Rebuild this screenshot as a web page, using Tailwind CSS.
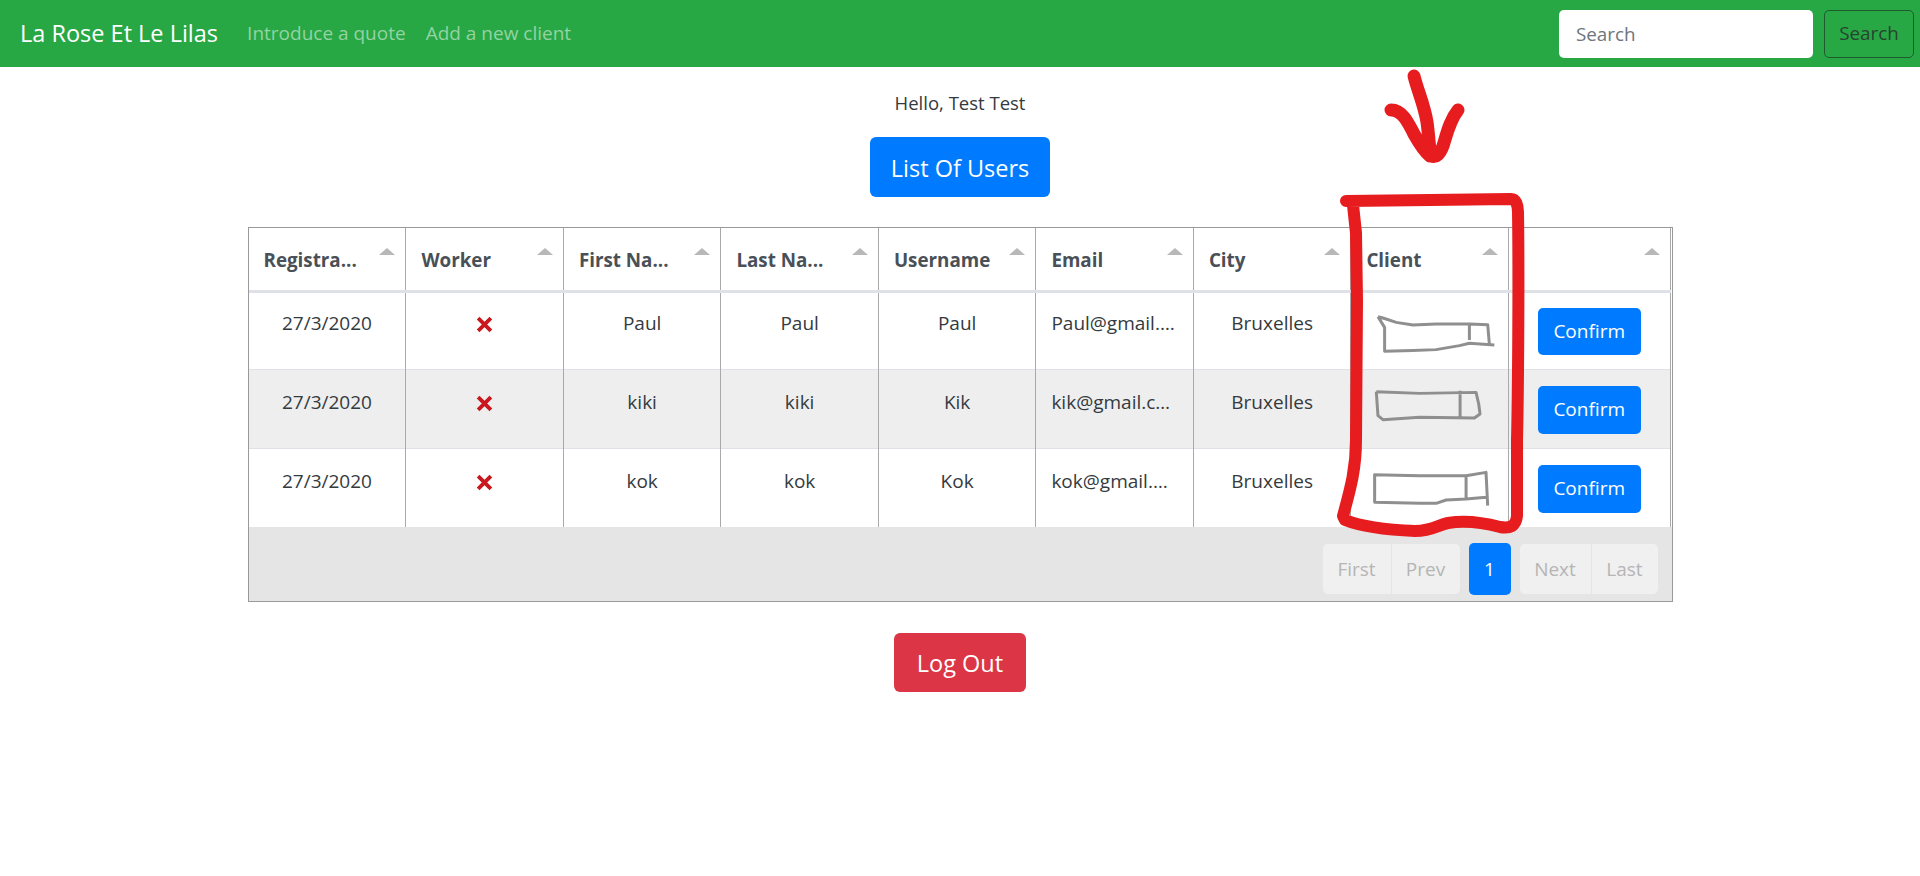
<!DOCTYPE html>
<html lang="en">
<head>
  <meta charset="UTF-8">
  <title>La Rose Et Le Lilas</title>
  <script src="https://cdn.jsdelivr.net/npm/@tailwindcss/browser@4"></script>
</head>
<body class="relative bg-white text-[#343a40] font-['Open_Sans',sans-serif] text-[19px] min-h-screen overflow-hidden">

  <!-- Navbar -->
  <nav class="h-[67px] bg-[#28a745] flex items-center pl-[20px] pr-[6px]">
    <a class="text-white text-[23.5px] mr-[29px]">La Rose Et Le Lilas</a>
    <a class="text-[#94d3a2] text-[19px] mr-[20px]">Introduce a quote</a>
    <a class="text-[#94d3a2] text-[19px]">Add a new client</a>
    <input placeholder="Search" class="ml-auto w-[254px] h-[48px] bg-white rounded-[5px] px-[17px] text-[18.8px] placeholder:text-[#6c757d] mr-[11px]">
    <button class="w-[90px] h-[48px] rounded-[5px] border border-[#1e5c30] text-[#27442f] text-[18.8px]">Search</button>
  </nav>

  <main class="flex flex-col items-center">
    <p class="mt-[21px] h-[29px] leading-[29px] text-[18.5px]">Hello, Test Test</p>
    <button class="mt-[20px] w-[180px] h-[60px] pt-[3px] bg-[#007bff] text-white text-[23.5px] rounded-[6px]">List Of Users</button>

    <div class="mt-[30px] w-[1425px] border border-[#999]">
      <table class="table-fixed w-[1422px] border-collapse">
        <colgroup>
          <col class="w-[157.4px]"><col class="w-[157.5px]"><col class="w-[157.5px]"><col class="w-[157.5px]">
          <col class="w-[157.5px]"><col class="w-[157.5px]"><col class="w-[157.5px]"><col class="w-[157.5px]"><col>
        </colgroup>
        <thead>
          <tr class="h-[63px] border-b-[3px] border-[#dee2e6] text-[#495057] text-left font-bold text-[18.8px]">
            <th class="relative pl-[15px] pt-[2px] border-r border-[#aaa] whitespace-nowrap">Registra...<span class="absolute top-[20px] right-[10px] border-x-[8px] border-x-transparent border-b-[7px] border-b-[#b8b8b8]"></span></th>
            <th class="relative pl-[15px] pt-[2px] border-r border-[#aaa] whitespace-nowrap">Worker<span class="absolute top-[20px] right-[10px] border-x-[8px] border-x-transparent border-b-[7px] border-b-[#b8b8b8]"></span></th>
            <th class="relative pl-[15px] pt-[2px] border-r border-[#aaa] whitespace-nowrap">First Na...<span class="absolute top-[20px] right-[10px] border-x-[8px] border-x-transparent border-b-[7px] border-b-[#b8b8b8]"></span></th>
            <th class="relative pl-[15px] pt-[2px] border-r border-[#aaa] whitespace-nowrap">Last Na...<span class="absolute top-[20px] right-[10px] border-x-[8px] border-x-transparent border-b-[7px] border-b-[#b8b8b8]"></span></th>
            <th class="relative pl-[15px] pt-[2px] border-r border-[#aaa] whitespace-nowrap">Username<span class="absolute top-[20px] right-[10px] border-x-[8px] border-x-transparent border-b-[7px] border-b-[#b8b8b8]"></span></th>
            <th class="relative pl-[15px] pt-[2px] border-r border-[#aaa] whitespace-nowrap">Email<span class="absolute top-[20px] right-[10px] border-x-[8px] border-x-transparent border-b-[7px] border-b-[#b8b8b8]"></span></th>
            <th class="relative pl-[15px] pt-[2px] border-r border-[#aaa] whitespace-nowrap">City<span class="absolute top-[20px] right-[10px] border-x-[8px] border-x-transparent border-b-[7px] border-b-[#b8b8b8]"></span></th>
            <th class="relative pl-[15px] pt-[2px] border-r border-[#aaa] whitespace-nowrap">Client<span class="absolute top-[20px] right-[10px] border-x-[8px] border-x-transparent border-b-[7px] border-b-[#b8b8b8]"></span></th>
            <th class="relative border-r border-[#aaa]"><span class="absolute top-[20px] right-[10px] border-x-[8px] border-x-transparent border-b-[7px] border-b-[#b8b8b8]"></span></th>
          </tr>
        </thead>
        <tbody class="text-center">
          <!-- row 1 -->
          <tr class="h-[78px] border-b border-[#dee2e6] align-top">
            <td class="pt-[16px] border-r border-[#aaa]">27/3/2020</td>
            <td class="pt-[23px] border-r border-[#aaa]"><svg class="mx-auto w-[17px] h-[17px]" viewBox="0 0 16 16"><path d="M2 2 14 14M14 2 2 14" stroke="#c9181e" stroke-width="3.6"/></svg></td>
            <td class="pt-[16px] border-r border-[#aaa]">Paul</td>
            <td class="pt-[16px] border-r border-[#aaa]">Paul</td>
            <td class="pt-[16px] border-r border-[#aaa]">Paul</td>
            <td class="pt-[16px] px-[15px] border-r border-[#aaa] text-left truncate">Paul@gmail.com</td>
            <td class="pt-[16px] border-r border-[#aaa]">Bruxelles</td>
            <td class="border-r border-[#aaa] align-middle">
              <svg class="block mx-auto w-[133px] h-[50px]" viewBox="130 76 400 150" fill="none" stroke="#8f8f8f" stroke-width="9" stroke-linejoin="round"><path d="M175 108 190 112 230 125 280 133 350 130 450 130 505 132 510 190M525 193 450 188 420 195 350 207 280 210 195 212 195 140 175 108M450 130V178"/></svg>
            </td>
            <td class="pt-[15px] border-r border-[#aaa]"><button class="w-[103px] h-[47px] bg-[#007bff] text-white rounded-[5px]">Confirm</button></td>
          </tr>
          <!-- row 2 -->
          <tr class="h-[79px] border-b border-[#dee2e6] align-top bg-[#eeeeee]">
            <td class="pt-[18px] border-r border-[#aaa]">27/3/2020</td>
            <td class="pt-[25px] border-r border-[#aaa]"><svg class="mx-auto w-[17px] h-[17px]" viewBox="0 0 16 16"><path d="M2 2 14 14M14 2 2 14" stroke="#c9181e" stroke-width="3.6"/></svg></td>
            <td class="pt-[18px] border-r border-[#aaa]">kiki</td>
            <td class="pt-[18px] border-r border-[#aaa]">kiki</td>
            <td class="pt-[18px] border-r border-[#aaa]">Kik</td>
            <td class="pt-[18px] px-[15px] border-r border-[#aaa] text-left truncate">kik@gmail.com</td>
            <td class="pt-[18px] border-r border-[#aaa]">Bruxelles</td>
            <td class="border-r border-[#aaa] align-middle">
              <svg class="block mx-auto w-[133px] h-[50px]" viewBox="130 310 400 150" fill="none" stroke="#8f8f8f" stroke-width="9" stroke-linejoin="round"><path d="M170 333 300 338 470 335 478 370 482 400 465 412 300 410 190 417 175 405 170 333M422 330V412"/></svg>
            </td>
            <td class="pt-[16px] border-r border-[#aaa]"><button class="w-[103px] h-[48px] bg-[#007bff] text-white rounded-[5px]">Confirm</button></td>
          </tr>
          <!-- row 3 -->
          <tr class="h-[79px] align-top">
            <td class="pt-[18px] border-r border-[#aaa]">27/3/2020</td>
            <td class="pt-[25px] border-r border-[#aaa]"><svg class="mx-auto w-[17px] h-[17px]" viewBox="0 0 16 16"><path d="M2 2 14 14M14 2 2 14" stroke="#c9181e" stroke-width="3.6"/></svg></td>
            <td class="pt-[18px] border-r border-[#aaa]">kok</td>
            <td class="pt-[18px] border-r border-[#aaa]">kok</td>
            <td class="pt-[18px] border-r border-[#aaa]">Kok</td>
            <td class="pt-[18px] pl-[15px] pr-[20px] border-r border-[#aaa] text-left truncate">kok@gmail.com</td>
            <td class="pt-[18px] border-r border-[#aaa]">Bruxelles</td>
            <td class="border-r border-[#aaa] align-middle">
              <svg class="block mx-auto w-[133px] h-[50px]" viewBox="130 547 400 150" fill="none" stroke="#8f8f8f" stroke-width="9" stroke-linejoin="round"><path d="M162 582 300 585 440 585 500 575 505 675M165 580V665L300 668 350 668 380 658 440 655 500 650M440 585V658"/></svg>
            </td>
            <td class="pt-[16px] border-r border-[#aaa]"><button class="w-[103px] h-[48px] bg-[#007bff] text-white rounded-[5px]">Confirm</button></td>
          </tr>
        </tbody>
      </table>

      <!-- Pagination -->
      <div class="h-[74px] pt-[10px] bg-[#e5e5e5] flex items-center justify-end pr-[14px] text-[#b5b5b5]">
        <div class="flex items-center">
          <span class="w-[68px] h-[50px] leading-[50px] text-center bg-[#f0f0f0] rounded-l-[5px] mr-[1px]">First</span>
          <span class="w-[68px] h-[50px] leading-[50px] text-center bg-[#f0f0f0] rounded-r-[5px]">Prev</span>
          <span class="mx-[9px] w-[42px] h-[52px] leading-[52px] text-center bg-[#007bff] text-white rounded-[5px]">1</span>
          <span class="w-[71px] h-[50px] leading-[50px] text-center bg-[#f0f0f0] rounded-l-[5px] mr-[1px]">Next</span>
          <span class="w-[66px] h-[50px] leading-[50px] text-center bg-[#f0f0f0] rounded-r-[5px]">Last</span>
        </div>
      </div>
    </div>

    <button class="mt-[31px] w-[132px] h-[59px] pt-[3px] bg-[#dc3545] text-white text-[23.5px] rounded-[6px]">Log Out</button>
  </main>

  <!-- Red marker annotation drawn over the page -->
  <svg class="absolute top-0 left-0 w-[1920px] h-[876px] pointer-events-none" viewBox="0 0 1920 876" fill="none" stroke="#e71c1f" stroke-linecap="round" stroke-linejoin="round">
    <path stroke-width="13" d="M1414 76C1418 92 1424 104 1427 122 1429 136 1429 146 1431 156 1436 158 1440 154 1443 146 1447 133 1450 120 1458 110M1391 110C1402 110 1408 122 1414 134 1419 143 1423 150 1430 156"/>
    <path stroke-width="12" d="M1346 201 1430 200 1511 199C1516 199 1518 205 1518 212 1519 280 1518 400 1517 440L1517 516C1516 526 1510 529 1500 527 1485 523 1465 520 1448 523 1438 525 1432 531 1415 531 1390 530 1365 528 1345 520L1343 516C1350 490 1356 470 1356 440L1357 300 1356 233 1353 205"/>
  </svg>

</body>
</html>
